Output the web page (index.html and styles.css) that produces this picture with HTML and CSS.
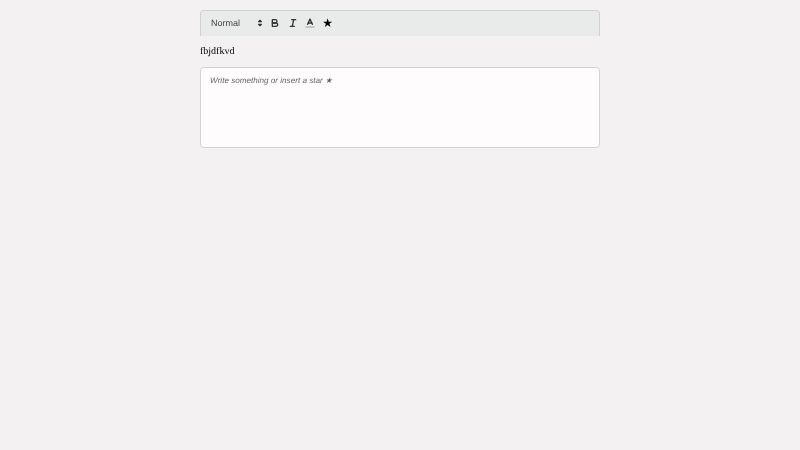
FILE: index.html
```html
<!DOCTYPE html>
<html lang="en">
<head>
    <meta charset="UTF-8">
    <title>Editor</title>
    <link rel="stylesheet" href="styles.css">
</head>
<body>
    <div class="wrap">
        <div class="toolbar">
            <div class="picker">
                <span>Normal</span>
                <svg class="icon" viewBox="0 0 18 18"><polygon class="line" points="7 11 9 13 11 11 7 11"/><polygon class="line" points="7 7 9 5 11 7 7 7"/></svg>
            </div>
            <button class="tool">
                <svg class="icon" viewBox="0 0 18 18"><path class="line" d="M5,4H9.5A2.5,2.5,0,0,1,12,6.5v0A2.5,2.5,0,0,1,9.5,9H5V4Z"/><path class="line" d="M5,9h5.5A2.5,2.5,0,0,1,13,11.5v0A2.5,2.5,0,0,1,10.5,14H5V9Z"/></svg>
            </button>
            <button class="tool">
                <svg class="icon" viewBox="0 0 18 18"><line class="line" x1="7" x2="13" y1="4" y2="4"/><line class="line" x1="5" x2="11" y1="14" y2="14"/><line class="line" x1="8" x2="10" y1="14" y2="4"/></svg>
            </button>
            <button class="tool">
                <svg class="icon" viewBox="0 0 18 18"><line class="line faint" x1="3" x2="15" y1="15" y2="15"/><polyline class="line" points="5.5 11 9 3 12.5 11"/><line class="line" x1="11.63" x2="6.38" y1="9" y2="9"/></svg>
            </button>
            <button class="tool star">★</button>
        </div>
        <p class="saved">fbjdfkvd</p>
        <div class="editor">
            <p class="placeholder">Write something or insert a star ★</p>
        </div>
    </div>
</body>
</html>
```

FILE: styles.css
```css
body {
    margin: 0;
    background: #f3f1f2;
    text-rendering: geometricPrecision;
}

.wrap {
    width: 400px;
    margin: 10px auto 0;
    filter: blur(0.4px);
}

.toolbar {
    box-sizing: border-box;
    height: 26px;
    display: flex;
    align-items: center;
    padding: 0 0 1px 5px;
    background: #e9ebea;
    border: 1px solid #d2d2d2;
    border-bottom: none;
    border-radius: 4px 4px 0 0;
}

.picker {
    box-sizing: border-box;
    width: 60.5px;
    padding-left: 5px;
    padding-right: 0.5px;
    display: flex;
    align-items: center;
    justify-content: space-between;
    font-family: "Liberation Sans", Arial, sans-serif;
    font-size: 9px;
    color: #444;
}

.icon {
    width: 12px;
    height: 12px;
    display: block;
}

.line {
    fill: none;
    stroke: #333;
    stroke-width: 2;
    stroke-linecap: round;
    stroke-linejoin: round;
}

.faint {
    stroke: #bbb;
}

.tool {
    width: 17.5px;
    height: 15px;
    padding: 0;
    border: none;
    background: none;
    display: flex;
    align-items: center;
    justify-content: center;
}

.star {
    font-family: "DejaVu Sans", sans-serif;
    font-size: 12px;
    line-height: 15px;
    color: #000;
}

.saved {
    margin: 10px 0 9px;
    font-family: "Liberation Serif", "Times New Roman", serif;
    font-size: 10px;
    line-height: 12px;
    color: #000;
}

.editor {
    box-sizing: border-box;
    height: 81px;
    padding: 7px 9px;
    background: #fffcfd;
    border: 1px solid #d2d2d2;
    border-radius: 4px;
}

.placeholder {
    margin: 0;
    font-family: "Liberation Sans", Arial, sans-serif;
    font-size: 8.125px;
    line-height: 12px;
    font-style: italic;
    color: #666;
}
```
